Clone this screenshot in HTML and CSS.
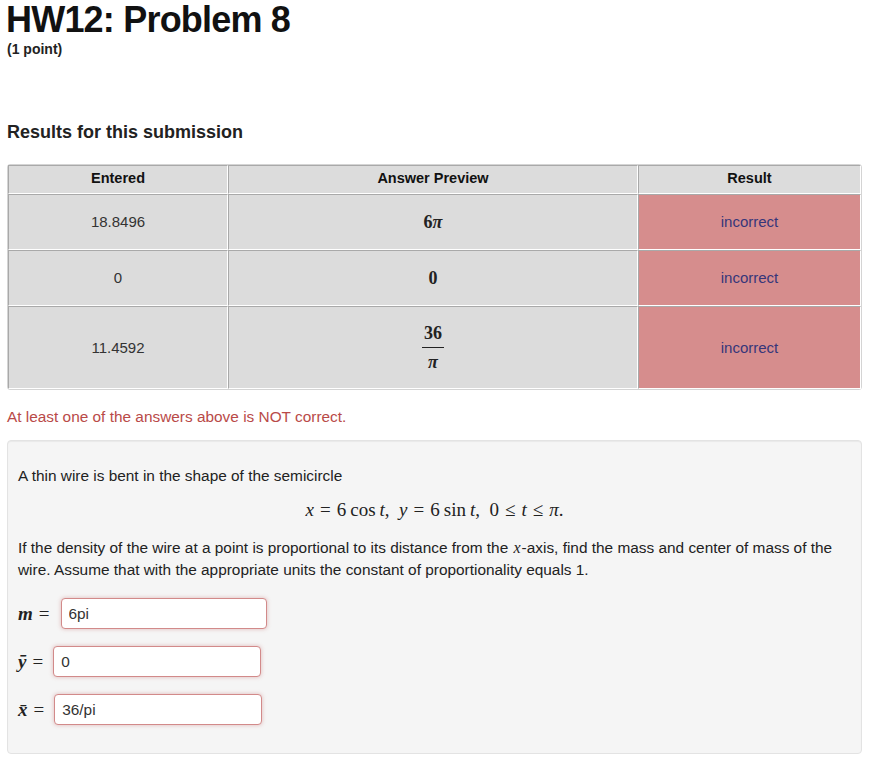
FILE: index.html
```html
<!DOCTYPE html>
<html lang="en">

<head>
    <meta charset="UTF-8">
    <meta name="viewport" content="width=device-width, initial-scale=1.0">
    <title>HW12: Problem 8</title>
    <link rel="stylesheet" href="styles.css">
</head>

<body>
    <div class="page_wrap">
        <h1 class="problem_title">HW12: Problem 8</h1>
        <div class="problem_points">(1 point)</div>

        <h2 class="results_title">Results for this submission</h2>
        <table class="attempt_results">
            <tr class="head_row">
                <th class="col_entered">Entered</th>
                <th class="col_preview">Answer Preview</th>
                <th class="col_result">Result</th>
            </tr>
            <tr class="short_row">
                <td>18.8496</td>
                <td class="preview"><span class="math">6<i>π</i></span></td>
                <td class="result">incorrect</td>
            </tr>
            <tr class="short_row">
                <td>0</td>
                <td class="preview"><span class="math">0</span></td>
                <td class="result">incorrect</td>
            </tr>
            <tr class="tall_row">
                <td>11.4592</td>
                <td class="preview">
                    <span class="math frac">
                        <span class="num">36</span>
                        <span class="den"><i>π</i></span>
                    </span>
                </td>
                <td class="result">incorrect</td>
            </tr>
        </table>

        <p class="results_warning">At least one of the answers above is NOT correct.</p>

        <!-- 문제 본문 -->
        <div class="problem_box">
            <p class="problem_text">A thin wire is bent in the shape of the semicircle</p>
            <div class="display_math">
                <i>x</i><span class="rel">=</span>6<span class="op">cos</span><i>t</i>,&nbsp;&nbsp;<i>y</i><span class="rel">=</span>6<span class="op">sin</span><i>t</i>,&nbsp;&nbsp;0<span class="rel">≤</span><i>t</i><span class="rel">≤</span><i>π</i>.
            </div>
            <p class="problem_text long">If the density of the wire at a point is proportional to its distance from the <span class="inline_math">x</span>-axis, find the mass and center of mass of the wire. Assume that with the appropriate units the constant of proportionality equals 1.</p>

            <div class="answer_row">
                <span class="answer_label"><b>m</b><span class="rel">=</span></span>
                <input class="answer_input m_input" type="text" value="6pi">
            </div>
            <div class="answer_row">
                <span class="answer_label"><b>ȳ</b><span class="rel">=</span></span>
                <input class="answer_input" type="text" value="0">
            </div>
            <div class="answer_row">
                <span class="answer_label"><b>x̄</b><span class="rel">=</span></span>
                <input class="answer_input" type="text" value="36/pi">
            </div>
        </div>
    </div>
</body>

</html>
```

FILE: styles.css
```css
* {
    margin: 0;
    padding: 0;
    box-sizing: border-box;
}

body {
    font-family: "Liberation Sans", Arial, sans-serif;
    font-size: 15.4px;
    line-height: 20px;
    color: #333;
    background: #fff;
}

.page_wrap {
    padding: 0 9px 0 7px;
}

.problem_title {
    margin-left: -1px;
    font-size: 36px;
    line-height: 40px;
    font-weight: bold;
    letter-spacing: -0.8px;
    color: #111;
}

.problem_points {
    margin-top: 1px;
    font-size: 14px;
    line-height: 16px;
    font-weight: bold;
    color: #222;
}

.results_title {
    margin-top: 65px;
    font-size: 18px;
    line-height: 20px;
    font-weight: bold;
    color: #222;
}

.attempt_results {
    width: 855px;
    margin-top: 22px;
    border-collapse: separate;
    border-spacing: 0;
    border: 1px solid #d4d4d4;
    border-radius: 3px;
}

.attempt_results th,
.attempt_results td {
    padding: 0;
    text-align: center;
    vertical-align: middle;
    background: #dcdcdc;
    border-top: 1px solid #a9a9a9;
    border-left: 1px solid #a9a9a9;
    border-right: 1px solid #fff;
    border-bottom: 1px solid #fff;
}

.attempt_results td {
    font-size: 15px;
}

.attempt_results th {
    font-size: 14.5px;
    font-weight: bold;
    color: #111;
    padding-bottom: 3px;
}

.col_entered {
    width: 220px;
}

.col_preview {
    width: 410px;
}

.head_row {
    height: 29px;
}

.short_row {
    height: 56px;
}

.tall_row {
    height: 83px;
}

.attempt_results td.result {
    background: #d68d8d;
    color: #36367a;
}

.math {
    font-family: "Liberation Serif", "Times New Roman", serif;
    font-size: 18px;
    font-weight: bold;
    color: #222;
}

.frac {
    display: inline-flex;
    flex-direction: column;
    align-items: center;
    line-height: 22px;
}

.frac .num {
    padding: 0 2px 3px;
    border-bottom: 1px solid #222;
}

.frac .den {
    padding-top: 3px;
}

.results_warning {
    margin-top: 19px;
    font-size: 15.4px;
    line-height: 16px;
    color: #b94a48;
}

.problem_box {
    margin-top: 15px;
    width: 855px;
    padding: 0 10px 28px;
    background: #f5f5f5;
    border: 1px solid #e3e3e3;
    border-radius: 4px;
    box-shadow: inset 0 1px 1px rgba(0, 0, 0, 0.05);
}

.problem_text {
    margin-top: 25px;
    color: #222;
}

.problem_text.long {
    margin-top: 15px;
    line-height: 22px;
}

.inline_math {
    display: inline-block;
    padding: 0 1px;
    font-family: "Liberation Serif", "Times New Roman", serif;
    font-style: italic;
    font-size: 16px;
    line-height: 16px;
}

.display_math {
    margin-top: 12px;
    text-align: center;
    font-family: "Liberation Serif", "Times New Roman", serif;
    font-size: 19px;
    line-height: 24px;
    color: #222;
}

.display_math .rel {
    margin: 0 6px;
}

.display_math .op {
    margin: 0 4px;
}

.answer_row {
    display: flex;
    align-items: center;
    gap: 10px;
    margin-top: 17px;
}

.answer_label {
    font-family: "Liberation Serif", "Times New Roman", serif;
    font-size: 19px;
    color: #222;
}

.answer_label b {
    font-style: italic;
}

.answer_label .rel {
    margin-left: 6px;
}

.answer_input {
    width: 208px;
    height: 31px;
    padding: 0 7px;
    font-family: "Liberation Sans", Arial, sans-serif;
    font-size: 15.4px;
    color: #333;
    background: #fff;
    border: 1px solid #d28a8a;
    border-radius: 4px;
    box-shadow: 0 0 4px rgba(185, 74, 72, 0.35);
}

.answer_input.m_input {
    width: 206px;
    margin-left: 1px;
}
```
